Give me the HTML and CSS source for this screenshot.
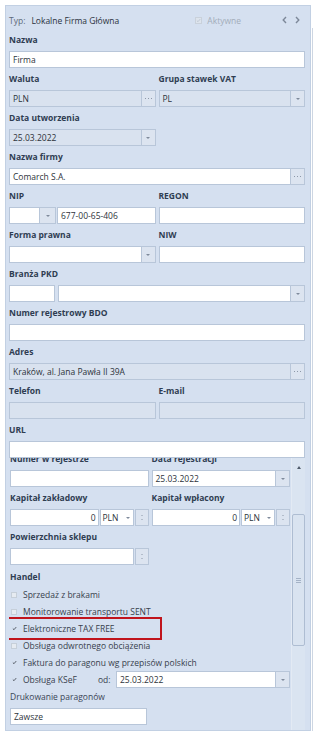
FILE: index.html
```html
<!DOCTYPE html>
<html lang="pl">
<head>
<meta charset="utf-8">
<title>Firma</title>
<link rel="stylesheet" href="styles.css">
</head>
<body>
<div class="screen">
  <div class="panel">
    <div class="topbar">
      <span class="typ-label">Typ:</span>
      <span class="typ-value">Lokalne Firma Główna</span>
      <span class="active">
        <span class="box box-dis"><svg width="7" height="7" viewBox="0 0 7 7"><path d="M1.2 3.6 L2.8 5.2 L5.9 1.5" fill="none" stroke="#b9c2ce" stroke-width="1.1"/></svg></span>
        Aktywne
      </span>
      <span class="nav">
        <svg width="5" height="8" viewBox="0 0 5 8"><path d="M4 1 L1.2 4 L4 7" fill="none" stroke="#7d8899" stroke-width="1.4"/></svg>
        <svg width="5" height="8" viewBox="0 0 5 8"><path d="M1 1 L3.8 4 L1 7" fill="none" stroke="#7d8899" stroke-width="1.4"/></svg>
      </span>
    </div>

    <div class="field">
      <span class="lbl">Nazwa</span>
      <div class="inp"><span class="val">Firma</span></div>
    </div>

    <div class="row2">
      <div class="field">
        <span class="lbl">Waluta</span>
        <div class="inp dis"><span class="val">PLN</span><span class="btn"><span class="dots"></span></span></div>
      </div>
      <div class="field">
        <span class="lbl">Grupa stawek VAT</span>
        <div class="inp dis"><span class="val">PL</span><span class="btn"><span class="arr"></span></span></div>
      </div>
    </div>

    <div class="row2">
      <div class="field">
        <span class="lbl">Data utworzenia</span>
        <div class="inp dis"><span class="val">25.03.2022</span><span class="btn"><span class="arr"></span></span></div>
      </div>
    </div>

    <div class="field">
      <span class="lbl">Nazwa firmy</span>
      <div class="inp"><span class="val">Comarch S.A.</span><span class="btn"><span class="dots"></span></span></div>
    </div>

    <div class="row2">
      <div class="field">
        <span class="lbl">NIP</span>
        <div class="pair">
          <div class="inp prefix"><span class="val"></span><span class="btn btn-wide"><span class="arr"></span></span></div>
          <div class="inp grow"><span class="val">677-00-65-406</span></div>
        </div>
      </div>
      <div class="field">
        <span class="lbl">REGON</span>
        <div class="inp"><span class="val"></span></div>
      </div>
    </div>

    <div class="row2">
      <div class="field">
        <span class="lbl">Forma prawna</span>
        <div class="inp"><span class="val"></span><span class="btn"><span class="arr"></span></span></div>
      </div>
      <div class="field">
        <span class="lbl">NIW</span>
        <div class="inp"><span class="val"></span></div>
      </div>
    </div>

    <div class="field">
      <span class="lbl">Branża PKD</span>
      <div class="pkd">
        <div class="inp pkd-code"><span class="val"></span></div>
        <div class="inp grow"><span class="val"></span><span class="btn"><span class="arr"></span></span></div>
      </div>
    </div>

    <div class="field">
      <span class="lbl">Numer rejestrowy BDO</span>
      <div class="inp"><span class="val"></span></div>
    </div>

    <div class="field">
      <span class="lbl">Adres</span>
      <div class="inp dis"><span class="val">Kraków, al. Jana Pawła II 39A</span><span class="btn"><span class="dots"></span></span></div>
    </div>

    <div class="row2">
      <div class="field">
        <span class="lbl">Telefon</span>
        <div class="inp dis"><span class="val"></span></div>
      </div>
      <div class="field">
        <span class="lbl">E-mail</span>
        <div class="inp dis"><span class="val"></span></div>
      </div>
    </div>

    <div class="field last">
      <span class="lbl">URL</span>
      <div class="inp"><span class="val"></span></div>
    </div>

    <div class="scroll">
      <div class="scroll-content">
        <div class="scroll-inner">
          <div class="row2">
            <div class="field">
              <span class="lbl">Numer w rejestrze</span>
              <div class="inp"><span class="val"></span></div>
            </div>
            <div class="field">
              <span class="lbl">Data rejestracji</span>
              <div class="inp"><span class="val">25.03.2022</span><span class="btn"><span class="arr"></span></span></div>
            </div>
          </div>

          <div class="row2">
            <div class="field">
              <span class="lbl">Kapitał zakładowy</span>
              <div class="money">
                <div class="inp grow"><span class="val num">0</span></div>
                <div class="inp cur"><span class="val">PLN</span><span class="cur-arr"><span class="arr"></span></span></div>
                <div class="inp spin"><span class="up"></span><span class="down"></span></div>
              </div>
            </div>
            <div class="field">
              <span class="lbl">Kapitał wpłacony</span>
              <div class="money">
                <div class="inp grow"><span class="val num">0</span></div>
                <div class="inp cur"><span class="val">PLN</span><span class="cur-arr"><span class="arr"></span></span></div>
                <div class="inp spin"><span class="up"></span><span class="down"></span></div>
              </div>
            </div>
          </div>

          <div class="row2">
            <div class="field">
              <span class="lbl">Powierzchnia sklepu</span>
              <div class="money">
                <div class="inp grow"><span class="val"></span></div>
                <div class="inp spin"><span class="up"></span><span class="down"></span></div>
              </div>
            </div>
          </div>

          <span class="lbl section">Handel</span>

          <div class="chk"><span class="box"></span><span class="chk-text">Sprzedaż z brakami</span></div>
          <div class="chk"><span class="box"></span><span class="chk-text">Monitorowanie transportu SENT</span></div>
          <div class="chk marked"><span class="box on"><svg width="7" height="7" viewBox="0 0 7 7"><path d="M1.2 3.6 L2.8 5.2 L5.9 1.5" fill="none" stroke="#3a3f47" stroke-width="1.1"/></svg></span><span class="chk-text">Elektroniczne TAX FREE</span></div>
          <div class="chk"><span class="box"></span><span class="chk-text">Obsługa odwrotnego obciążenia</span></div>
          <div class="chk"><span class="box on"><svg width="7" height="7" viewBox="0 0 7 7"><path d="M1.2 3.6 L2.8 5.2 L5.9 1.5" fill="none" stroke="#3a3f47" stroke-width="1.1"/></svg></span><span class="chk-text">Faktura do paragonu wg przepisów polskich</span></div>
          <div class="chk ksef">
            <span class="box on"><svg width="7" height="7" viewBox="0 0 7 7"><path d="M1.2 3.6 L2.8 5.2 L5.9 1.5" fill="none" stroke="#3a3f47" stroke-width="1.1"/></svg></span>
            <span class="chk-text ksef-text">Obsługa KSeF</span>
            <span class="od">od:</span>
            <div class="inp grow"><span class="val">25.03.2022</span><span class="btn"><span class="arr"></span></span></div>
          </div>

          <span class="lbl plain">Drukowanie paragonów</span>
          <div class="inp print"><span class="val">Zawsze</span></div>
        </div>
      </div>
      <div class="scrollbar">
        <div class="sb-up"><span class="tri-up"></span></div>
        <div class="sb-thumb"><span class="grip"></span></div>
      </div>
    </div>
  </div>
  <div class="edge"></div>
</div>
</body>
</html>
```

FILE: styles.css
```css
* { box-sizing: border-box; }

html, body {
  margin: 0;
  padding: 0;
  background: #ffffff;
}

body {
  font-family: "Open Sans", "Noto Sans", sans-serif;
  font-size: 8.5px;
  color: #333b46;
}

.screen {
  display: flex;
  align-items: flex-start;
  padding: 5px 0 0 5px;
}

.panel {
  width: 306px;
  height: 726px;
  background: #d5e0f0;
  border: 1px solid #c2d0e3;
  padding: 6px 5px 0 3px;
  display: flex;
  flex-direction: column;
  overflow: hidden;
}

.edge {
  width: 1px;
  height: 703px;
  margin: 23px 0 0 1px;
  background: #cdd6e2;
}

/* top bar */
.topbar {
  height: 16px;
  display: flex;
  align-items: center;
  margin-bottom: 5px;
  white-space: nowrap;
}

.typ-label {
  color: #5e6a7a;
  margin-right: 6px;
}

.typ-value {
  color: #2b333e;
}

.active {
  margin-left: auto;
  margin-right: 41px;
  display: flex;
  align-items: center;
  color: #a3adba;
}

.box {
  width: 7px;
  height: 7px;
  border: 1px solid #c6cfd9;
  background: #e6ebf1;
  display: inline-flex;
  align-items: center;
  justify-content: center;
  margin: 0 5px 0 1px;
  flex: none;
}

.box svg { display: block; }

.box-dis {
  background: #dde4ed;
  border-color: #c9d1db;
  margin-right: 5px;
}

.nav {
  display: flex;
  align-items: center;
  gap: 8px;
  padding-right: 5px;
}

.nav svg { display: block; }

/* fields */
.field { margin-bottom: 4px; min-width: 0; }
.field.last { margin-bottom: 0; }

.lbl {
  display: block;
  height: 14px;
  line-height: 14px;
  font-weight: 700;
  color: #2f3d52;
  margin-bottom: 4px;
  white-space: nowrap;
}

.row2 {
  display: grid;
  grid-template-columns: 1fr 1fr;
  column-gap: 3px;
}

.inp {
  height: 17px;
  border: 1px solid #b8c6d9;
  background: #ffffff;
  display: flex;
  align-items: stretch;
  min-width: 0;
}

.inp.dis { background: #d9e2ef; }

.val {
  flex: 1;
  min-width: 0;
  padding: 0 3px;
  line-height: 15px;
  white-space: nowrap;
  overflow: hidden;
  color: #2d333b;
}

.val.num { text-align: right; padding-right: 2px; }

.btn {
  width: 14px;
  flex: none;
  border-left: 1px solid #b8c6d9;
  background: #dce4f0;
  display: flex;
  align-items: center;
  justify-content: center;
}

.btn-wide { width: 16px; }

.arr {
  width: 0;
  height: 0;
  border-left: 2px solid transparent;
  border-right: 2px solid transparent;
  border-top: 2px solid #7f8a9b;
}

.dots {
  width: 7px;
  height: 1px;
  background: linear-gradient(90deg, #8d98a8 0 1px, transparent 1px 3px, #8d98a8 3px 4px, transparent 4px 6px, #8d98a8 6px 7px);
}

.pair {
  display: flex;
  gap: 1px;
}

.prefix { width: 47px; flex: none; }
.grow { flex: 1; }

.pkd {
  display: flex;
  gap: 3px;
}

.pkd-code { width: 46px; flex: none; }

/* scroll area */
.scroll {
  flex: 1;
  min-height: 0;
  display: flex;
  overflow: hidden;
}

.scroll-content {
  flex: 1;
  min-width: 0;
  padding: 0 1px;
  overflow: hidden;
}

.scroll-inner { margin-top: -6px; }

.money {
  display: flex;
  gap: 1px;
}

.cur {
  width: 34px;
  flex: none;
  background: #ffffff;
}

.cur .val { padding: 0 2px; }

.cur-arr {
  width: 10px;
  display: flex;
  align-items: center;
  justify-content: center;
}

.spin {
  width: 14px;
  flex: none;
  background: #dce4f0;
  flex-direction: column;
  align-items: center;
  justify-content: center;
  gap: 3px;
}

.up, .down {
  width: 0;
  height: 0;
  border-left: 1.5px solid transparent;
  border-right: 1.5px solid transparent;
}

.up { border-bottom: 1.5px solid #8995a6; }
.down { border-top: 1.5px solid #8995a6; }

.lbl.section {
  margin-top: 1px;
  margin-bottom: 2px;
}

.chk {
  height: 17px;
  display: flex;
  align-items: center;
}

.chk .box { margin: 0 6px 0 1px; width: 6px; height: 6px; }

.chk .box.on {
  background: transparent;
  border-color: transparent;
  width: 7px;
  height: 7px;
  margin-right: 5px;
}

.chk-text {
  color: #38414d;
  white-space: nowrap;
}

.marked {
  width: 149px;
  outline: 2px solid #c0141c;
  outline-offset: 1px;
}

.ksef-text { width: 75px; }

.od {
  width: 18px;
  color: #38414d;
}

.lbl.plain {
  font-weight: 400;
  color: #3b4657;
  margin-top: 2px;
}

.print { width: 137px; }

/* scrollbar */
.scrollbar {
  width: 14px;
  flex: none;
  background: #dae4f1;
  border-left: 1px solid #e3eaf4;
  display: flex;
  flex-direction: column;
  align-items: center;
}

.sb-up {
  height: 18px;
  width: 100%;
  display: flex;
  align-items: center;
  justify-content: center;
}

.tri-up {
  width: 0;
  height: 0;
  border-left: 2.5px solid transparent;
  border-right: 2.5px solid transparent;
  border-bottom: 3px solid #4f5b6b;
}

.sb-thumb {
  margin-top: 38px;
  width: 13px;
  height: 132px;
  border: 1px solid #aebdd2;
  border-radius: 2px;
  background: #d9e3f0;
  display: flex;
  align-items: center;
  justify-content: center;
}

.grip {
  width: 5px;
  height: 5px;
  background: repeating-linear-gradient(180deg, #a4b2c6 0 1px, transparent 1px 2px);
}
```
